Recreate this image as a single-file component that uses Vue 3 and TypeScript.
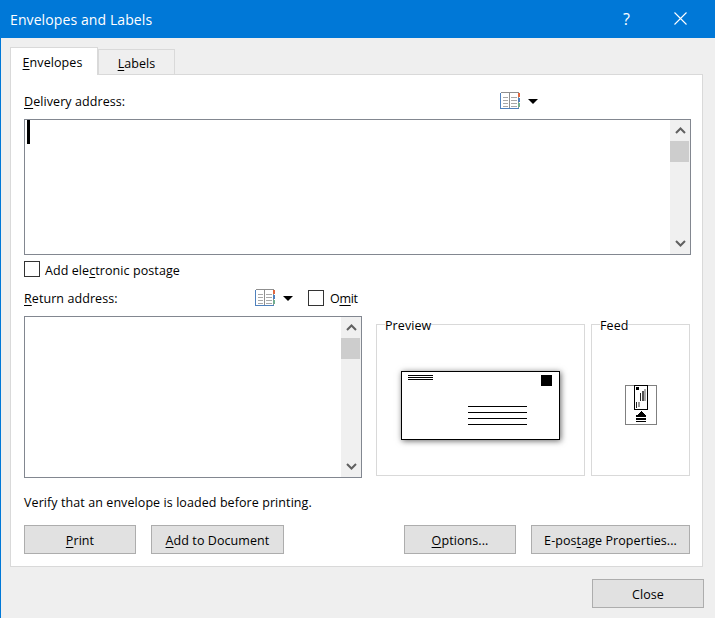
<script setup lang="ts">
const bookLines: number[] = [5, 8, 11, 14]
</script>

<template>
  <div class="dialog">
    <header class="titlebar">
      <span class="title">Envelopes and Labels</span>
      <span class="help">?</span>
      <svg class="close-x" width="13" height="13" viewBox="0 0 13 13">
        <path d="M0.5 0.5L12.5 12.5M12.5 0.5L0.5 12.5" stroke="#fff" stroke-width="1.1" fill="none" />
      </svg>
    </header>

    <nav class="tabs">
      <div class="tab active"><span><u>E</u>nvelopes</span></div>
      <div class="tab"><span><u>L</u>abels</span></div>
    </nav>

    <section class="panel">
      <div class="row delivery-row">
        <label class="label delivery-label"><u>D</u>elivery address:</label>
        <svg class="book" width="20" height="17" viewBox="0 0 20 17" shape-rendering="crispEdges">
          <rect x="0" y="0" width="19" height="17" fill="#fff" />
          <path d="M1 0.5H18.5V16M9.5 0V16" stroke="#8f8f8f" fill="none" />
          <path d="M0.5 1V16.5H19" stroke="#4f81bd" fill="none" />
          <path v-for="y in bookLines" :key="y" :d="`M3 ${y}.5H8M11 ${y}.5H17`" stroke="#a8a8a8" />
          <rect x="18" y="1" width="2" height="4" fill="#e0673f" />
          <rect x="18" y="6" width="2" height="4" fill="#4f81bd" />
          <rect x="18" y="11" width="2" height="4" fill="#70ad8f" />
        </svg>
        <span class="caret"></span>
      </div>

      <div class="textbox delivery-box">
        <div class="text-area"><span class="cursor"></span></div>
        <div class="scrollbar">
          <div class="sb-btn">
            <svg width="11" height="7" viewBox="0 0 11 7"><path d="M1 6L5.5 1.5L10 6" stroke="#606060" stroke-width="2" fill="none" /></svg>
          </div>
          <div class="thumb"></div>
          <div class="sb-fill"></div>
          <div class="sb-btn">
            <svg width="11" height="7" viewBox="0 0 11 7"><path d="M1 1L5.5 5.5L10 1" stroke="#606060" stroke-width="2" fill="none" /></svg>
          </div>
        </div>
      </div>

      <div class="row postage-row">
        <span class="checkbox"></span>
        <span class="label">Add ele<u>c</u>tronic postage</span>
      </div>

      <div class="row return-row">
        <label class="label return-label"><u>R</u>eturn address:</label>
        <svg class="book" width="20" height="17" viewBox="0 0 20 17" shape-rendering="crispEdges">
          <rect x="0" y="0" width="19" height="17" fill="#fff" />
          <path d="M1 0.5H18.5V16M9.5 0V16" stroke="#8f8f8f" fill="none" />
          <path d="M0.5 1V16.5H19" stroke="#4f81bd" fill="none" />
          <path v-for="y in bookLines" :key="y" :d="`M3 ${y}.5H8M11 ${y}.5H17`" stroke="#a8a8a8" />
          <rect x="18" y="1" width="2" height="4" fill="#e0673f" />
          <rect x="18" y="6" width="2" height="4" fill="#4f81bd" />
          <rect x="18" y="11" width="2" height="4" fill="#70ad8f" />
        </svg>
        <span class="caret"></span>
        <span class="checkbox omit-box"></span>
        <span class="label omit-text">O<u>m</u>it</span>
      </div>

      <div class="lower">
        <div class="textbox return-box">
          <div class="text-area"></div>
          <div class="scrollbar">
            <div class="sb-btn">
              <svg width="11" height="7" viewBox="0 0 11 7"><path d="M1 6L5.5 1.5L10 6" stroke="#606060" stroke-width="2" fill="none" /></svg>
            </div>
            <div class="thumb"></div>
            <div class="sb-fill"></div>
            <div class="sb-btn">
              <svg width="11" height="7" viewBox="0 0 11 7"><path d="M1 1L5.5 5.5L10 1" stroke="#606060" stroke-width="2" fill="none" /></svg>
            </div>
          </div>
        </div>

        <fieldset class="group preview">
          <legend>Preview</legend>
          <svg class="envelope" width="159" height="69" viewBox="0 0 159 69" shape-rendering="crispEdges">
            <rect x="0.5" y="0.5" width="158" height="68" fill="#fff" stroke="#000" />
            <rect x="140" y="4" width="11" height="11" fill="#000" />
            <path d="M7 4.5H32M7 6.5H32M7 8.5H32" stroke="#000" />
            <path d="M67 35.5H126M67 41.5H126M67 47.5H126M67 53.5H126" stroke="#000" />
          </svg>
        </fieldset>

        <fieldset class="group feed">
          <legend>Feed</legend>
          <svg class="feed-icon" width="32" height="40" viewBox="0 0 32 40" shape-rendering="crispEdges">
            <rect x="0.5" y="0.5" width="31" height="39" fill="#fff" stroke="#808080" />
            <rect x="9.5" y="0.5" width="13" height="24" fill="#fff" stroke="#000" />
            <rect x="11" y="2" width="3" height="3" fill="#000" />
            <rect x="15" y="8" width="1" height="8" fill="#222" />
            <rect x="17" y="6" width="2" height="10" fill="#555" />
            <rect x="19" y="4" width="2" height="12" fill="#aaa" />
            <rect x="11" y="17" width="1" height="6" fill="#222" />
            <rect x="13" y="17" width="2" height="5" fill="#999" />
            <path d="M16 26L20 30H12Z" fill="#000" />
            <rect x="11" y="30" width="10" height="2" fill="#000" />
            <rect x="11" y="33" width="10" height="2" fill="#000" />
            <rect x="11" y="36" width="10" height="1" fill="#000" />
          </svg>
        </fieldset>
      </div>

      <p class="label verify">Verify that an envelope is loaded before printing.</p>

      <div class="actions">
        <button class="btn w112"><span><u>P</u>rint</span></button>
        <button class="btn w133"><span><u>A</u>dd to Document</span></button>
        <button class="btn w112 options"><span><u>O</u>ptions...</span></button>
        <button class="btn w159"><span>E-pos<u>t</u>age Properties...</span></button>
      </div>
    </section>

    <footer class="footer">
      <button class="btn w112">Close</button>
    </footer>
  </div>
</template>

<style>
html,
body {
  margin: 0;
  background: #efefef;
}
</style>

<style scoped>
.dialog {
  box-sizing: border-box;
  width: 715px;
  height: 618px;
  display: flex;
  flex-direction: column;
  background: #efefef;
  border-left: 1px solid #0078d7;
  font-family: "Open Sans", "Noto Sans", sans-serif;
  font-size: 12.5px;
  letter-spacing: 0.08px;
  color: #000;
  overflow: hidden;
}
u {
  text-underline-offset: 2px;
  text-decoration-thickness: 1px;
}
.label {
  position: relative;
  top: 1px;
}
.titlebar {
  flex: none;
  height: 38px;
  display: flex;
  align-items: center;
  padding-left: 9px;
  background: #0078d7;
  color: #fff;
}
.title {
  font-size: 14px;
  letter-spacing: 0.1px;
  width: 613px;
}
.help {
  font-size: 16px;
  letter-spacing: 0;
  margin-bottom: 1px;
  width: 51px;
  font-weight: 400;
}
.close-x {
  margin-bottom: 2px;
}
.tabs {
  flex: none;
  height: 27px;
  margin: 9px 0 0 9px;
  display: flex;
  align-items: flex-end;
  position: relative;
  z-index: 1;
}
.tab {
  box-sizing: border-box;
  width: 77px;
  height: 25px;
  padding-top: 2px;
  display: flex;
  align-items: center;
  justify-content: center;
  border: 1px solid #d9d9d9;
  border-bottom: 0;
  background: #efefef;
}
.tab.active {
  width: 88px;
  height: 28px;
  margin: 0 0 -1px;
  padding-right: 3px;
  background: #fff;
}
.panel {
  box-sizing: border-box;
  flex: none;
  width: 693px;
  height: 493px;
  margin-left: 9px;
  padding: 17px 0 0 13px;
  background: #fff;
  border: 1px solid #d9d9d9;
}
.row {
  display: flex;
  align-items: center;
  height: 17px;
}
.delivery-label {
  width: 476px;
}
.return-label {
  width: 231px;
}
.caret {
  width: 0;
  height: 0;
  margin: 1px 0 0 8px;
  border-left: 5px solid transparent;
  border-right: 5px solid transparent;
  border-top: 5px solid #000;
}
.textbox {
  box-sizing: border-box;
  display: flex;
  border: 1px solid #828790;
  background: #fff;
}
.delivery-box {
  width: 667px;
  height: 136px;
  margin-top: 10px;
}
.text-area {
  flex: 1;
}
.cursor {
  display: block;
  width: 3px;
  height: 24px;
  margin-left: 2px;
  background: #000;
}
.scrollbar {
  flex: none;
  width: 20px;
  display: flex;
  flex-direction: column;
  background: #f0f0f0;
}
.sb-btn {
  flex: none;
  height: 21px;
  display: flex;
  align-items: center;
  justify-content: center;
}
.thumb {
  flex: none;
  height: 21px;
  margin-right: 1px;
  background: #cdcdcd;
}
.sb-fill {
  flex: 1;
}
.postage-row {
  margin-top: 6px;
  height: 16px;
}
.checkbox {
  box-sizing: border-box;
  flex: none;
  width: 16px;
  height: 16px;
  margin-right: 5px;
  border: 1px solid #333;
  background: #fff;
}
.omit-box {
  margin-left: 15px;
  margin-right: 6px;
}
.omit-text {
  letter-spacing: -0.3px;
}
.return-row {
  margin-top: 12px;
}
.lower {
  display: flex;
  align-items: flex-start;
  margin-top: 10px;
}
.return-box {
  flex: none;
  width: 338px;
  height: 162px;
}
.group {
  box-sizing: border-box;
  height: 160px;
  margin: 0;
  padding: 0;
  min-width: 0;
  border: 1px solid #d9d9d9;
}
.group legend {
  position: relative;
  top: 1px;
  margin-left: 8px;
  padding: 0;
  line-height: 17px;
  background: #fff;
}
.preview {
  width: 209px;
  margin-left: 14px;
}
.feed {
  width: 99px;
  margin-left: 6px;
}
.envelope {
  display: block;
  margin: 38px 0 0 24px;
  box-shadow: 1px 1px 6px rgba(0, 0, 0, 0.6);
}
.feed-icon {
  display: block;
  margin: 52px 0 0 33px;
}
.verify {
  margin: 16px 0 0;
  height: 17px;
  line-height: 17px;
  top: 0;
}
.actions {
  display: flex;
  gap: 15px;
  margin-top: 14px;
}
.options {
  margin-left: 105px;
}
.btn {
  box-sizing: border-box;
  flex: none;
  height: 29px;
  padding: 2px 0 0;
  border: 1px solid #adadad;
  background: #e1e1e1;
  font: inherit;
  letter-spacing: inherit;
  color: #000;
}
.w112 {
  width: 112px;
}
.w133 {
  width: 133px;
}
.w159 {
  width: 159px;
}
.footer {
  flex: none;
  display: flex;
  padding: 12px 0 0 591px;
}
</style>
